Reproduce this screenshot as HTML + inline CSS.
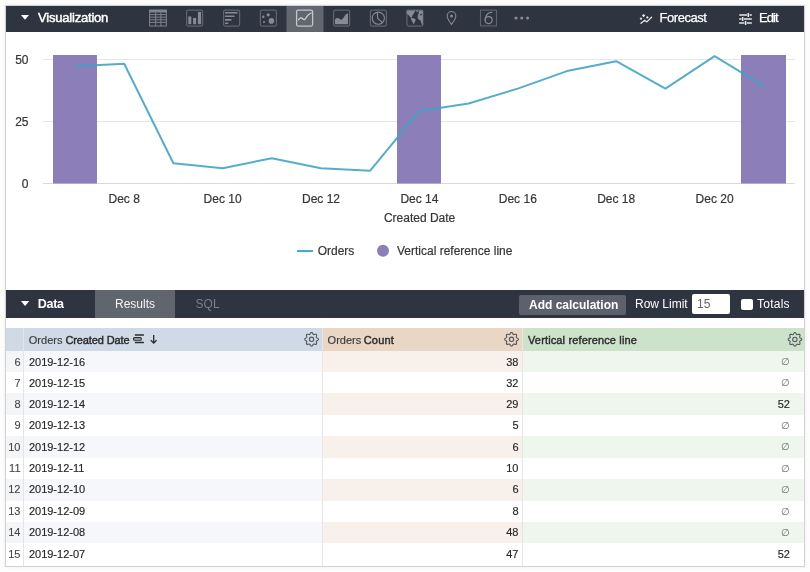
<!DOCTYPE html>
<html><head><meta charset="utf-8">
<style>
*{box-sizing:border-box;margin:0;padding:0}
html,body{will-change:transform;width:810px;height:572px;overflow:hidden;background:#fdfdfd;font-family:"Liberation Sans",sans-serif}
.abs{position:absolute}
#panel{position:absolute;left:5px;top:5px;width:800px;height:562px;border:1px solid #d2d2d4;background:#fff;box-shadow:0 0 3px rgba(0,0,0,.07)}
.bar{position:absolute;left:6px;width:798px;background:#2e3440}
.t{position:absolute;white-space:pre;line-height:1}
.wh{color:#fff}
.th{font-size:11px;color:#3a3a3a;-webkit-text-stroke:0.15px #3a3a3a}
.th b{font-weight:normal;-webkit-text-stroke:0.4px #2a2a2a;color:#2a2a2a}
.td{font-size:11px;color:#262626;-webkit-text-stroke:0.15px #262626}
.nul{font-size:9.5px;color:#6a6a6a;-webkit-text-stroke:0px}
.rn{color:#444;-webkit-text-stroke:0.1px #444}
</style></head><body>
<div id="panel"></div>

<!-- Visualization header -->
<div class="bar" style="top:6px;height:26px"></div>
<svg class="abs" style="left:0;top:0" width="810" height="40">
  <path d="M21 15 L29 15 L25 19.8 Z" fill="#fff"/>
</svg>
<div class="t wh" style="left:38px;top:10.6px;font-size:13px;letter-spacing:-0.2px;-webkit-text-stroke:0.45px #fff">Visualization</div>

<svg class="abs" style="left:0;top:0" width="810" height="34">
  <rect x="286.5" y="6" width="37" height="26" fill="#62666f"/>
  <g fill="none" stroke="#5f646e" stroke-width="1.2">
    <rect x="186.6" y="10.1" width="16" height="16" rx="1.5"/>
    <rect x="223.6" y="10.1" width="16" height="16" rx="1.5"/>
    <rect x="260.4" y="10.1" width="16" height="16" rx="1.5"/>
    <rect x="333.6" y="10.1" width="16" height="16" rx="1.5"/>
    <rect x="370.4" y="10.1" width="16" height="16" rx="1.5"/>
    <rect x="406.9" y="10.1" width="16" height="16" rx="1.5"/>
  </g>
  <rect x="296.6" y="10.1" width="16" height="16" rx="1.5" fill="none" stroke="#c4c6ca" stroke-width="1.3"/>
  <path d="M298.5 19.8 C300 17.6 301.6 17.4 302.6 18.6 C303.8 20.2 305 20 306.2 17.6 C307.4 15 309 13.8 311.2 13" fill="none" stroke="#cfd1d4" stroke-width="1.3" stroke-linecap="round"/>
  <!-- table icon -->
  <g fill="none" stroke="#7e828a" stroke-width="1">
    <rect x="149.6" y="10.2" width="16.8" height="15.8"/>
    <path d="M149.6 14.6H166.4M149.6 17.2H166.4M149.6 19.8H166.4M149.6 22.4H166.4M155.7 12.5V26M160.9 12.5V26"/>
  </g>
  <rect x="149.1" y="9.7" width="17.8" height="2.8" fill="#80848c"/>
  <!-- bar icon -->
  <g fill="#868a92">
    <rect x="188.3" y="16.4" width="3" height="7.8"/>
    <rect x="193.1" y="17.9" width="3" height="6.3"/>
    <rect x="197.9" y="11.9" width="3.2" height="12.3"/>
  </g>
  <!-- hbar -->
  <g stroke="#868a92" stroke-width="1.6" stroke-linecap="butt">
    <path d="M225 12.7H237.5M225 16.2H234.5M225 19.9H231.4M225 23.2H228.3"/>
  </g>
  <!-- scatter -->
  <g fill="#868a92">
    <circle cx="263.3" cy="16.7" r="1.2"/>
    <circle cx="268.2" cy="14.8" r="1.6"/>
    <circle cx="264" cy="21.9" r="1"/>
    <circle cx="271.4" cy="20.9" r="2.8"/>
  </g>
  <!-- area -->
  <path d="M335 24.2V19.4C336 18.3 337.3 17.8 338.2 18 C339.4 18.3 340.4 19.8 341.4 19.7 C343 19.4 344.6 15.2 346.4 14 L348 13.2V24.2Z" fill="#868a92"/>
  <!-- pie -->
  <g fill="none" stroke="#868a92" stroke-width="1.1">
    <circle cx="378.3" cy="18.2" r="6.1"/>
    <path d="M377.2 12.1 L377.8 18.6 L382.6 22.6"/>
  </g>
  <!-- map -->
  <g fill="#868a92">
    <path d="M406.8 10.6 H415.6 L414 13 L412.6 15.2 L411.8 17.6 L410.4 17.4 L409 15.6 L406.8 13.4 Z"/>
    <path d="M416.2 10.6 H418.4 L417.8 12 L416.6 12.2 Z"/>
    <path d="M410.8 18.1 L413.6 18.2 L415.8 19.6 L414.8 22 L413.6 24.6 L412.8 22.6 L411.6 20.6 Z"/>
    <path d="M419 10.6 H422.8 V25.2 L421.8 24.2 L421 22 L420.6 20.4 L419.2 19.8 L417.8 18.4 L417.6 15.8 L418.6 13.6 Z"/>
  </g>
  <circle cx="421" cy="14.6" r="0.9" fill="#2e3440"/>
  <!-- pin -->
  <path d="M451.5 24.4 C449.8 21.8 447.2 19 447.2 15.9 C447.2 13.4 449.1 11.5 451.5 11.5 C453.9 11.5 455.8 13.4 455.8 15.9 C455.8 19 453.2 21.8 451.5 24.4Z" fill="none" stroke="#868a92" stroke-width="1.1"/>
  <circle cx="451.5" cy="16" r="1.5" fill="#868a92"/>
  <!-- 6 -->
  <rect x="480.5" y="10.1" width="16" height="15.8" fill="none" stroke="#5f646e" stroke-width="1.1"/>
  <path d="M491.8 12.4 C489 12.2 485.3 14.4 485.1 19.9" fill="none" stroke="#868a92" stroke-width="1.2" stroke-linecap="round"/><circle cx="488.6" cy="20.1" r="3.5" fill="none" stroke="#868a92" stroke-width="1.2"/>
  <!-- dots -->
  <g fill="#868a92"><circle cx="516" cy="18" r="1.6"/><circle cx="521.8" cy="18" r="1.6"/><circle cx="527.6" cy="18" r="1.6"/></g>
  <!-- forecast -->
  <g fill="#e6e6e8">
    <path d="M643.6 13.9 L645.3 15.6 L643.6 17.3 L641.9 15.6Z"/>
    <path d="M641 17.3 L642.4 18.7 L641 20.1 L639.6 18.7Z"/>
    <path d="M647.3 16 L648.7 17.4 L647.3 18.8 L645.9 17.4Z"/>
  </g>
  <path d="M641 23.3 L644.7 20.2 L646.8 21.9 L651.6 17.3" fill="none" stroke="#e6e6e8" stroke-width="1.3" stroke-linecap="round" stroke-linejoin="round"/>
  <!-- edit -->
  <g stroke="#e6e6e8" stroke-width="1.5">
    <path d="M739.2 15H747.2M749.6 15H751.8M739.2 18.9H741.6M744 18.9H751.8M739.2 23H744.4M746.8 23H751.8"/>
    <path d="M748.3 13V17M742.7 17V20.9M745.6 21V25"/>
  </g>
</svg>
<div class="t wh" style="left:659.5px;top:11.2px;font-size:13px;letter-spacing:-0.45px;-webkit-text-stroke:0.25px #fff">Forecast</div>
<div class="t wh" style="left:759px;top:11.2px;font-size:13px;letter-spacing:-0.9px;-webkit-text-stroke:0.25px #fff">Edit</div>

<!-- chart -->
<svg class="abs" style="left:0;top:0" width="810" height="290">
  <g stroke="#e6e6e8" stroke-width="1">
    <line x1="43" y1="59.5" x2="795" y2="59.5"/>
    <line x1="43" y1="121.5" x2="795" y2="121.5"/>
  </g>
  <line x1="43" y1="183.5" x2="795" y2="183.5" stroke="#d9d7e4" stroke-width="1"/>
  <g fill="#8c7fb9">
    <rect x="53" y="55" width="44" height="128.5"/>
    <rect x="397" y="55" width="44" height="128.5"/>
    <rect x="741" y="55" width="45" height="128.5"/>
  </g>
  <polyline fill="none" stroke="#3fa2c4" stroke-opacity="0.88" stroke-width="2" stroke-linejoin="round"
    points="75.0,66.2 124.2,63.7 173.4,163.2 222.6,168.2 271.8,158.2 321.0,168.2 370.2,170.7 419.4,110.9 468.6,103.5 517.8,88.6 567.0,71.1 616.2,61.2 665.4,88.6 714.6,56.2 763.8,86.1"/>
  <g font-family="Liberation Sans" font-size="12" fill="#363636" stroke="#363636" stroke-width="0.2">
    <text x="28.5" y="63.5" text-anchor="end">50</text>
    <text x="28.5" y="125.7" text-anchor="end">25</text>
    <text x="28.5" y="188" text-anchor="end">0</text>
    <text x="124.2" y="203" text-anchor="middle">Dec 8</text>
    <text x="222.6" y="203" text-anchor="middle">Dec 10</text>
    <text x="321" y="203" text-anchor="middle">Dec 12</text>
    <text x="419.4" y="203" text-anchor="middle">Dec 14</text>
    <text x="517.8" y="203" text-anchor="middle">Dec 16</text>
    <text x="616.2" y="203" text-anchor="middle">Dec 18</text>
    <text x="714.6" y="203" text-anchor="middle">Dec 20</text>
    <text x="419.6" y="222.2" text-anchor="middle">Created Date</text>
    <text x="317.7" y="255" >Orders</text>
    <text x="397" y="255">Vertical reference line</text>
  </g>
  <line x1="297" y1="251" x2="313" y2="251" stroke="#4ea9c9" stroke-width="2"/>
  <circle cx="383" cy="250.7" r="6" fill="#8c7fb9"/>
</svg>

<!-- Data bar -->
<div class="bar" style="top:289.5px;height:28.2px"></div>
<div class="abs" style="left:95px;top:289.5px;width:80px;height:28.2px;background:#61656e"></div>
<svg class="abs" style="left:0;top:280px" width="40" height="40">
  <path d="M21 21.1 L29.2 21.1 L25.1 26 Z" fill="#fff"/>
</svg>
<div class="t wh" style="left:37.8px;top:297.6px;font-size:12.5px;font-weight:bold;letter-spacing:-0.3px">Data</div>
<div class="t" style="left:115px;top:298px;font-size:12px;color:#f4f4f5">Results</div>
<div class="t" style="left:195.6px;top:298px;font-size:12px;color:#7b7f87">SQL</div>

<div class="abs" style="left:519px;top:294.5px;width:107px;height:20px;background:#5d616b;border-radius:2px"></div>
<div class="t wh" style="left:529px;top:298.5px;font-size:12px;font-weight:bold">Add calculation</div>
<div class="t wh" style="left:635px;top:298px;font-size:12px">Row Limit</div>
<div class="abs" style="left:692px;top:294px;width:38px;height:20px;background:#fff;border-radius:2px"></div>
<div class="t" style="left:697px;top:298px;font-size:12px;color:#666">15</div>
<div class="abs" style="left:741px;top:299px;width:12px;height:11px;background:#fff;border-radius:2px"></div>
<div class="t wh" style="left:757px;top:298px;font-size:12px;letter-spacing:0.25px">Totals</div>

<!-- table -->
<div class="abs" style="left:6px;top:328px;width:316px;height:23px;background:#cfdae6"></div>
<div class="abs" style="left:322px;top:328px;width:201px;height:23px;background:#e9d6c5"></div>
<div class="abs" style="left:523px;top:328px;width:281px;height:23px;background:#cde2cb"></div>
<!-- ROWS -->
<div class="abs" style="left:6px;top:351.3px;width:17px;height:21.0px;background:#f4f5f7"></div>
<div class="abs" style="left:24px;top:351.3px;width:298px;height:21.0px;background:#f5f7fa"></div>
<div class="abs" style="left:323px;top:351.3px;width:199px;height:21.0px;background:#f8f0eb"></div>
<div class="abs" style="left:523px;top:351.3px;width:281px;height:21.0px;background:#eef6ed"></div>
<div class="abs" style="left:6px;top:393.3px;width:17px;height:21.4px;background:#f4f5f7"></div>
<div class="abs" style="left:24px;top:393.3px;width:298px;height:21.4px;background:#f5f7fa"></div>
<div class="abs" style="left:323px;top:393.3px;width:199px;height:21.4px;background:#f8f0eb"></div>
<div class="abs" style="left:523px;top:393.3px;width:281px;height:21.4px;background:#eef6ed"></div>
<div class="abs" style="left:6px;top:436.3px;width:17px;height:21.5px;background:#f4f5f7"></div>
<div class="abs" style="left:24px;top:436.3px;width:298px;height:21.5px;background:#f5f7fa"></div>
<div class="abs" style="left:323px;top:436.3px;width:199px;height:21.5px;background:#f8f0eb"></div>
<div class="abs" style="left:523px;top:436.3px;width:281px;height:21.5px;background:#eef6ed"></div>
<div class="abs" style="left:6px;top:479px;width:17px;height:21.9px;background:#f4f5f7"></div>
<div class="abs" style="left:24px;top:479px;width:298px;height:21.9px;background:#f5f7fa"></div>
<div class="abs" style="left:323px;top:479px;width:199px;height:21.9px;background:#f8f0eb"></div>
<div class="abs" style="left:523px;top:479px;width:281px;height:21.9px;background:#eef6ed"></div>
<div class="abs" style="left:6px;top:521.9px;width:17px;height:21.5px;background:#f4f5f7"></div>
<div class="abs" style="left:24px;top:521.9px;width:298px;height:21.5px;background:#f5f7fa"></div>
<div class="abs" style="left:323px;top:521.9px;width:199px;height:21.5px;background:#f8f0eb"></div>
<div class="abs" style="left:523px;top:521.9px;width:281px;height:21.5px;background:#eef6ed"></div>
<div class="t td rn" style="right:789.5px;top:356.5px">6</div>
<div class="t td" style="left:28.9px;top:356.5px">2019-12-16</div>
<div class="t td" style="right:291.5px;top:356.5px">38</div>
<div class="t td nul" style="right:20px;top:357.1px">∅</div>
<div class="t td rn" style="right:789.5px;top:377.5px">7</div>
<div class="t td" style="left:28.9px;top:377.5px">2019-12-15</div>
<div class="t td" style="right:291.5px;top:377.5px">32</div>
<div class="t td nul" style="right:20px;top:378.1px">∅</div>
<div class="t td rn" style="right:789.5px;top:398.5px">8</div>
<div class="t td" style="left:28.9px;top:398.5px">2019-12-14</div>
<div class="t td" style="right:291.5px;top:398.5px">29</div>
<div class="t td" style="right:20px;top:398.5px">52</div>
<div class="t td rn" style="right:789.5px;top:419.9px">9</div>
<div class="t td" style="left:28.9px;top:419.9px">2019-12-13</div>
<div class="t td" style="right:291.5px;top:419.9px">5</div>
<div class="t td nul" style="right:20px;top:420.5px">∅</div>
<div class="t td rn" style="right:789.5px;top:441.5px">10</div>
<div class="t td" style="left:28.9px;top:441.5px">2019-12-12</div>
<div class="t td" style="right:291.5px;top:441.5px">6</div>
<div class="t td nul" style="right:20px;top:442.1px">∅</div>
<div class="t td rn" style="right:789.5px;top:463.0px">11</div>
<div class="t td" style="left:28.9px;top:463.0px">2019-12-11</div>
<div class="t td" style="right:291.5px;top:463.0px">10</div>
<div class="t td nul" style="right:20px;top:463.6px">∅</div>
<div class="t td rn" style="right:789.5px;top:484.2px">12</div>
<div class="t td" style="left:28.9px;top:484.2px">2019-12-10</div>
<div class="t td" style="right:291.5px;top:484.2px">6</div>
<div class="t td nul" style="right:20px;top:484.8px">∅</div>
<div class="t td rn" style="right:789.5px;top:506.1px">13</div>
<div class="t td" style="left:28.9px;top:506.1px">2019-12-09</div>
<div class="t td" style="right:291.5px;top:506.1px">8</div>
<div class="t td nul" style="right:20px;top:506.7px">∅</div>
<div class="t td rn" style="right:789.5px;top:527.1px">14</div>
<div class="t td" style="left:28.9px;top:527.1px">2019-12-08</div>
<div class="t td" style="right:291.5px;top:527.1px">48</div>
<div class="t td nul" style="right:20px;top:527.7px">∅</div>
<div class="t td rn" style="right:789.5px;top:548.6px">15</div>
<div class="t td" style="left:28.9px;top:548.6px">2019-12-07</div>
<div class="t td" style="right:291.5px;top:548.6px">47</div>
<div class="t td" style="right:20px;top:548.6px">52</div>
<!-- /ROWS -->
<div class="abs" style="left:23px;top:328px;width:1px;height:238px;background:#e3e5e8"></div>
<div class="abs" style="left:322px;top:328px;width:1px;height:238px;background:#e6e6e6"></div>
<div class="abs" style="left:522px;top:328px;width:1px;height:238px;background:#e6e6e6"></div>
<div class="t th" style="left:28.8px;top:334.6px">Orders <b style="letter-spacing:-0.12px">Created Date</b></div>
<div class="t th" style="left:327.6px;top:334.6px;word-spacing:-0.6px">Orders <b style="letter-spacing:0.2px">Count</b></div>
<div class="t th" style="left:528px;top:334.6px"><b style="letter-spacing:0.14px">Vertical reference line</b></div>
<!-- GEARS -->
<svg class="abs" style="left:0;top:320px" width="810" height="40"><g fill="none" stroke="#52565c" stroke-width="1.1" transform="translate(0,-320)"><path d="M311.55 332.45 L311.99 332.58 L312.39 332.93 L312.72 333.42 L312.99 333.91 L313.24 334.32 L313.52 334.54 L313.88 334.58 L314.34 334.47 L314.88 334.31 L315.46 334.20 L315.99 334.24 L316.39 334.46 L316.61 334.86 L316.65 335.39 L316.54 335.97 L316.38 336.51 L316.27 336.97 L316.31 337.33 L316.53 337.61 L316.94 337.86 L317.43 338.13 L317.92 338.46 L318.27 338.86 L318.40 339.30 L318.27 339.74 L317.92 340.14 L317.43 340.47 L316.94 340.74 L316.53 340.99 L316.31 341.27 L316.27 341.63 L316.38 342.09 L316.54 342.63 L316.65 343.21 L316.61 343.74 L316.39 344.14 L315.99 344.36 L315.46 344.40 L314.88 344.29 L314.34 344.13 L313.88 344.02 L313.52 344.06 L313.24 344.28 L312.99 344.69 L312.72 345.18 L312.39 345.67 L311.99 346.02 L311.55 346.15 L311.11 346.02 L310.71 345.67 L310.38 345.18 L310.11 344.69 L309.86 344.28 L309.58 344.06 L309.22 344.02 L308.76 344.13 L308.22 344.29 L307.64 344.40 L307.11 344.36 L306.71 344.14 L306.49 343.74 L306.45 343.21 L306.56 342.63 L306.72 342.09 L306.83 341.63 L306.79 341.27 L306.57 340.99 L306.16 340.74 L305.67 340.47 L305.18 340.14 L304.83 339.74 L304.70 339.30 L304.83 338.86 L305.18 338.46 L305.67 338.13 L306.16 337.86 L306.57 337.61 L306.79 337.33 L306.83 336.97 L306.72 336.51 L306.56 335.97 L306.45 335.39 L306.49 334.86 L306.71 334.46 L307.11 334.24 L307.64 334.20 L308.22 334.31 L308.76 334.47 L309.22 334.58 L309.58 334.54 L309.86 334.32 L310.11 333.91 L310.38 333.42 L310.71 332.93 L311.11 332.58Z"/><circle cx="311.55" cy="339.3" r="2.2"/><path d="M511.50 332.45 L511.94 332.58 L512.34 332.93 L512.67 333.42 L512.94 333.91 L513.19 334.32 L513.47 334.54 L513.83 334.58 L514.29 334.47 L514.83 334.31 L515.41 334.20 L515.94 334.24 L516.34 334.46 L516.56 334.86 L516.60 335.39 L516.49 335.97 L516.33 336.51 L516.22 336.97 L516.26 337.33 L516.48 337.61 L516.89 337.86 L517.38 338.13 L517.87 338.46 L518.22 338.86 L518.35 339.30 L518.22 339.74 L517.87 340.14 L517.38 340.47 L516.89 340.74 L516.48 340.99 L516.26 341.27 L516.22 341.63 L516.33 342.09 L516.49 342.63 L516.60 343.21 L516.56 343.74 L516.34 344.14 L515.94 344.36 L515.41 344.40 L514.83 344.29 L514.29 344.13 L513.83 344.02 L513.47 344.06 L513.19 344.28 L512.94 344.69 L512.67 345.18 L512.34 345.67 L511.94 346.02 L511.50 346.15 L511.06 346.02 L510.66 345.67 L510.33 345.18 L510.06 344.69 L509.81 344.28 L509.53 344.06 L509.17 344.02 L508.71 344.13 L508.17 344.29 L507.59 344.40 L507.06 344.36 L506.66 344.14 L506.44 343.74 L506.40 343.21 L506.51 342.63 L506.67 342.09 L506.78 341.63 L506.74 341.27 L506.52 340.99 L506.11 340.74 L505.62 340.47 L505.13 340.14 L504.78 339.74 L504.65 339.30 L504.78 338.86 L505.13 338.46 L505.62 338.13 L506.11 337.86 L506.52 337.61 L506.74 337.33 L506.78 336.97 L506.67 336.51 L506.51 335.97 L506.40 335.39 L506.44 334.86 L506.66 334.46 L507.06 334.24 L507.59 334.20 L508.17 334.31 L508.71 334.47 L509.17 334.58 L509.53 334.54 L509.81 334.32 L510.06 333.91 L510.33 333.42 L510.66 332.93 L511.06 332.58Z"/><circle cx="511.5" cy="339.3" r="2.2"/><path d="M794.90 332.55 L795.34 332.68 L795.74 333.03 L796.07 333.52 L796.34 334.01 L796.59 334.42 L796.87 334.64 L797.23 334.68 L797.69 334.57 L798.23 334.41 L798.81 334.30 L799.34 334.34 L799.74 334.56 L799.96 334.96 L800.00 335.49 L799.89 336.07 L799.73 336.61 L799.62 337.07 L799.66 337.43 L799.88 337.71 L800.29 337.96 L800.78 338.23 L801.27 338.56 L801.62 338.96 L801.75 339.40 L801.62 339.84 L801.27 340.24 L800.78 340.57 L800.29 340.84 L799.88 341.09 L799.66 341.37 L799.62 341.73 L799.73 342.19 L799.89 342.73 L800.00 343.31 L799.96 343.84 L799.74 344.24 L799.34 344.46 L798.81 344.50 L798.23 344.39 L797.69 344.23 L797.23 344.12 L796.87 344.16 L796.59 344.38 L796.34 344.79 L796.07 345.28 L795.74 345.77 L795.34 346.12 L794.90 346.25 L794.46 346.12 L794.06 345.77 L793.73 345.28 L793.46 344.79 L793.21 344.38 L792.93 344.16 L792.57 344.12 L792.11 344.23 L791.57 344.39 L790.99 344.50 L790.46 344.46 L790.06 344.24 L789.84 343.84 L789.80 343.31 L789.91 342.73 L790.07 342.19 L790.18 341.73 L790.14 341.37 L789.92 341.09 L789.51 340.84 L789.02 340.57 L788.53 340.24 L788.18 339.84 L788.05 339.40 L788.18 338.96 L788.53 338.56 L789.02 338.23 L789.51 337.96 L789.92 337.71 L790.14 337.43 L790.18 337.07 L790.07 336.61 L789.91 336.07 L789.80 335.49 L789.84 334.96 L790.06 334.56 L790.46 334.34 L790.99 334.30 L791.57 334.41 L792.11 334.57 L792.57 334.68 L792.93 334.64 L793.21 334.42 L793.46 334.01 L793.73 333.52 L794.06 333.03 L794.46 332.68Z"/><circle cx="794.9" cy="339.4" r="2.2"/>
<path d="M134.9 335H143.9M134.9 342.4H143.9" stroke="#2b2b2b" stroke-width="1.5"/>
<rect x="133.5" y="337.6" width="7.8" height="2.6" rx="1" fill="#b9bcc1" stroke="#2b2b2b" stroke-width="1.1"/>
<path d="M153.7 335V343M150.8 340.3L153.7 343.2L156.6 340.3" stroke="#2b2b2b" stroke-width="1.3"/>
</g></svg>
<!-- /GEARS -->
</body></html>
